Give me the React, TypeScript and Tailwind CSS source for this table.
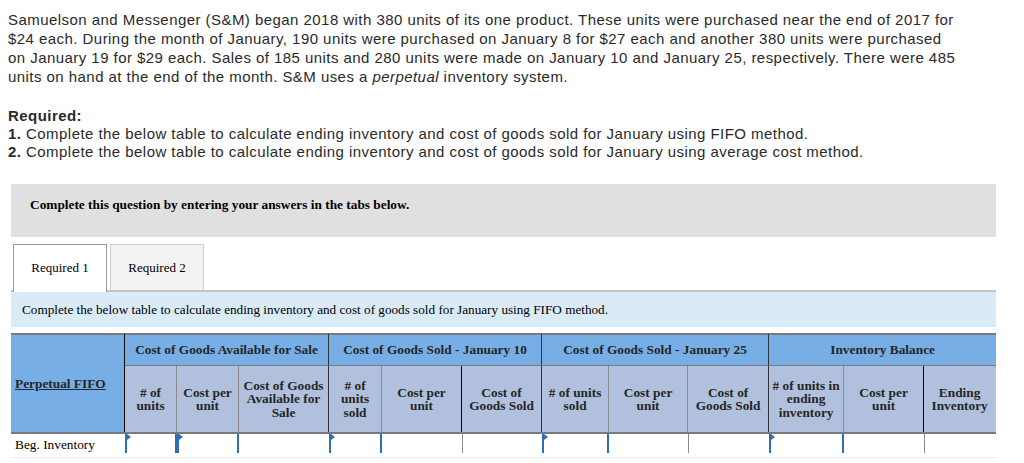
import React from 'react';

const serif = "font-['Liberation_Serif','Times_New_Roman',serif]";

type Sub = { lines: string[]; right: string; input?: boolean };

// second header row, one entry per column after "Perpetual FIFO"
const subHeaders: Sub[] = [
  { lines: ['# of', 'units'], right: 'border-[#8a8a8a]', input: true },
  { lines: ['Cost per', 'unit'], right: 'border-[#8a8a8a]', input: true },
  { lines: ['Cost of Goods', 'Available for', 'Sale'], right: 'border-[#333]' },
  { lines: ['# of', 'units', 'sold'], right: 'border-[#8a8a8a]', input: true },
  { lines: ['Cost per', 'unit'], right: 'border-black' },
  { lines: ['Cost of', 'Goods Sold'], right: 'border-[#333]' },
  { lines: ['# of units', 'sold'], right: 'border-[#8a8a8a]', input: true },
  { lines: ['Cost per', 'unit'], right: 'border-[#8a8a8a]' },
  { lines: ['Cost of', 'Goods Sold'], right: 'border-[#333]' },
  { lines: ['# of units in', 'ending', 'inventory'], right: 'border-[#8a8a8a]', input: true },
  { lines: ['Cost per', 'unit'], right: 'border-black' },
  { lines: ['Ending', 'Inventory'], right: 'border-transparent' },
];

const widths = [114, 52, 62, 90, 53, 80, 80, 67, 79, 81, 75, 80, 72];

const groups = [
  'Cost of Goods Available for Sale',
  'Cost of Goods Sold - January 10',
  'Cost of Goods Sold - January 25',
  'Inventory Balance',
];

const InputCell: React.FC = () => (
  <div className="relative h-full border-x-2 border-[#2f6eba] bg-white">
    <span className="absolute left-0 top-0 h-0 w-0 border-y-[3px] border-l-[4px] border-y-transparent border-l-[#2f6eba]" />
  </div>
);

const App: React.FC = () => {
  return (
    <div className="relative h-[463px] w-[1024px] overflow-hidden bg-white">
      {/* Question text */}
      <div className="px-2 pt-[10px] font-['Liberation_Sans',Arial,sans-serif] text-[15px] leading-[19px] tracking-[0.45px] text-[#2a2a2a]">
        <p>
          Samuelson and Messenger (S&amp;M) began 2018 with 380 units of its one product. These units were purchased near the end of 2017 for
          <br />
          $24 each. During the month of January, 190 units were purchased on January 8 for $27 each and another 380 units were purchased
          <br />
          on January 19 for $29 each. Sales of 185 units and 280 units were made on January 10 and January 25, respectively. There were 485
          <br />
          units on hand at the end of the month. S&amp;M uses a <i>perpetual</i> inventory system.
        </p>
        <div className="mt-[21px] leading-[18px]">
          <p className="font-bold">Required:</p>
          <p>
            <b>1.</b> Complete the below table to calculate ending inventory and cost of goods sold for January using FIFO method.
          </p>
          <p>
            <b>2.</b> Complete the below table to calculate ending inventory and cost of goods sold for January using average cost method.
          </p>
        </div>
      </div>

      {/* Instructions box */}
      <div className={`mx-[11px] mt-[23px] h-[53px] w-[985px] bg-[#e0e0e0] pl-[19px] pt-[11px] text-[13.33px] font-bold text-black ${serif}`}>
        Complete this question by entering your answers in the tabs below.
      </div>

      {/* Tabs */}
      <div className={`ml-[11px] mt-[7px] flex h-[48px] w-[985px] items-end text-[13px] text-black ${serif}`}>
        <div className="w-[2px] self-stretch border-b-2 border-[#c4c4c4]" />
        <div className="flex h-[48px] w-[94px] items-center justify-center border border-b-0 border-[#999] bg-white pb-[2px]">
          Required 1
        </div>
        <div className="w-[3px] self-stretch border-b-2 border-[#c4c4c4]" />
        <div className="flex h-[48px] w-[94px] items-center justify-center border border-b-2 border-[#cfcfcf] border-b-[#c4c4c4] bg-[#f2f2f2]">
          Required 2
        </div>
        <div className="flex-1 self-stretch border-b-2 border-[#c4c4c4]" />
      </div>

      <div className={`ml-[11px] flex h-[35px] w-[985px] items-center bg-[#daebf8] pl-[11px] text-[13.2px] text-black ${serif}`}>
        Complete the below table to calculate ending inventory and cost of goods sold for January using FIFO method.
      </div>

      {/* FIFO table */}
      <div className="ml-[11px] mt-[6px] h-[120px] w-[985px] overflow-hidden">
        <table className={`w-[985px] table-fixed border-separate border-spacing-0 text-[13.33px] text-[#262626] ${serif}`}>
          <colgroup>
            {widths.map((w, i) => (
              <col key={i} style={{ width: w }} />
            ))}
          </colgroup>
          <thead>
            <tr className="h-[33px]">
              <th
                rowSpan={2}
                className="border-t-2 border-r border-[#7a7a7a] border-r-black bg-[#77aee5] pl-[4px] text-left align-middle font-bold underline"
              >
                Perpetual FIFO
              </th>
              {groups.map((g, i) => (
                <th
                  key={g}
                  colSpan={3}
                  className={`border-t-2 border-b border-[#7a7a7a] bg-[#77aee5] text-center font-bold ${
                    i < 3 ? 'border-r border-r-[#333]' : ''
                  }`}
                >
                  {g}
                </th>
              ))}
            </tr>
            <tr className="h-[66px]">
              {subHeaders.map((s, i) => (
                <th
                  key={i}
                  className={`border-r bg-[#b1c0dc] px-[1px] text-center align-middle font-bold leading-[13.5px] ${s.right}`}
                >
                  {s.lines.map((l, j) => (
                    <React.Fragment key={j}>
                      {j > 0 && <br />}
                      {l}
                    </React.Fragment>
                  ))}
                </th>
              ))}
            </tr>
          </thead>
          <tbody>
            <tr className="h-[24px]">
              <td className="border-t-2 border-[#7a7a7a] pl-[4px] align-middle text-black">Beg. Inventory</td>
              {subHeaders.map((s, i) => (
                <td
                  key={i}
                  className={`h-[24px] border-t-2 border-[#7a7a7a] p-0 ${
                    s.input ? '' : 'border-l border-l-[#8a8a8a]'
                  } ${i > 0 && subHeaders[i - 1].input ? 'border-l-0' : ''}`}
                >
                  {s.input ? <InputCell /> : null}
                </td>
              ))}
            </tr>
          </tbody>
        </table>
      </div>
      <div className="ml-[11px] mt-[4px] h-px w-[985px] bg-[#ececec]" />
    </div>
  );
};

export default App;
